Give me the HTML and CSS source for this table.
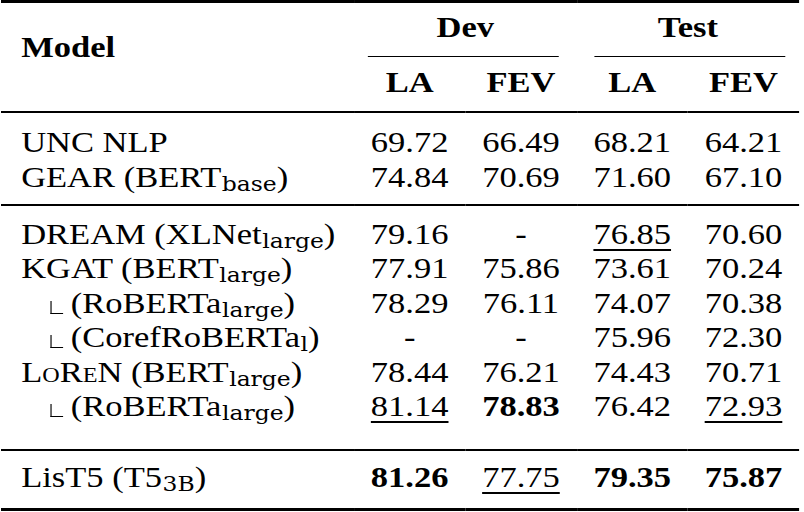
FILE: index.html
```html
<!DOCTYPE html>
<html lang="en">
<head>
<meta charset="utf-8">
<title>Fact verification results</title>
<link rel="stylesheet" href="styles.css">
</head>
<body>
<div class="sheet">
<table class="results">
<colgroup>
<col class="c-model"><col class="c-num"><col class="c-num"><col class="c-num"><col class="c-num">
</colgroup>
<thead>
<tr class="hrow1">
<th class="model" rowspan="2">Model</th>
<th class="group" colspan="2"><div class="glabel">Dev</div><div class="cmid cmid-dev"></div></th>
<th class="group" colspan="2"><div class="glabel">Test</div><div class="cmid cmid-test"></div></th>
</tr>
<tr class="hrow2"><th>LA</th><th>FEV</th><th>LA</th><th>FEV</th></tr>
</thead>
<tbody class="sec1">
<tr class="first"><td class="name">UNC NLP</td><td>69.72</td><td>66.49</td><td>68.21</td><td>64.21</td></tr>
<tr class="last"><td class="name">GEAR (BERT<sub>base</sub>)</td><td>74.84</td><td>70.69</td><td>71.60</td><td>67.10</td></tr>
</tbody>
<tbody class="sec2">
<tr class="first"><td class="name">DREAM (XLNet<sub>large</sub>)</td><td>79.16</td><td>-</td><td><u>76.85</u></td><td>70.60</td></tr>
<tr><td class="name">KGAT (BERT<sub>large</sub>)</td><td>77.91</td><td>75.86</td><td>73.61</td><td>70.24</td></tr>
<tr><td class="name sub"><span class="corner"></span>(RoBERTa<sub>large</sub>)</td><td>78.29</td><td>76.11</td><td>74.07</td><td>70.38</td></tr>
<tr><td class="name sub"><span class="corner"></span>(CorefRoBERTa<sub>l</sub>)</td><td>-</td><td>-</td><td>75.96</td><td>72.30</td></tr>
<tr><td class="name">L<span class="sc">o</span>R<span class="sc">e</span>N (BERT<sub>large</sub>)</td><td>78.44</td><td>76.21</td><td>74.43</td><td>70.71</td></tr>
<tr class="last"><td class="name sub"><span class="corner"></span>(RoBERTa<sub>large</sub>)</td><td><u>81.14</u></td><td><b>78.83</b></td><td>76.42</td><td><u>72.93</u></td></tr>
</tbody>
<tbody class="sec3">
<tr class="only"><td class="name">LisT5 (T5<sub>3B</sub>)</td><td><b>81.26</b></td><td><u>77.75</u></td><td><b>79.35</b></td><td><b>75.87</b></td></tr>
</tbody>
</table>
</div>
</body>
</html>
```

FILE: styles.css
```css
html, body {
  margin: 0;
  padding: 0;
  background: #ffffff;
}

.sheet {
  width: 694px;
  margin-left: 1px;
  transform: scaleX(1.15);
  transform-origin: 0 0;
  font-family: "Liberation Serif", "Times New Roman", serif;
  font-size: 30px;
  color: #000;
}

.results {
  width: 694px;
  table-layout: fixed;
  border-collapse: separate;
  border-spacing: 0;
}

.c-model { width: 307px; }
.c-num { width: 96.75px; }

.results th,
.results td {
  padding: 0 10px;
  line-height: 34.5px;
  white-space: nowrap;
  text-align: center;
  vertical-align: top;
}

.results th {
  font-weight: bold;
}

/* header */
.hrow1 th {
  border-top: 3px solid #000;
}

.results th.model {
  text-align: left;
  padding-top: 27px;
  padding-left: 17.5px;
  border-bottom: 2px solid #000;
}

.results th.group {
  padding: 6.6px 0 0;
}

.glabel {
  line-height: 34.5px;
}

.cmid {
  height: 1.5px;
  margin-top: 11.9px;
  background: #000;
}

.cmid-dev {
  margin-left: 12.2px;
  margin-right: 15.7px;
}

.cmid-test {
  margin-left: 15.7px;
  margin-right: 12.2px;
}

.hrow2 th {
  padding-top: 7.2px;
  padding-bottom: 11.8px;
  border-bottom: 2px solid #000;
}

/* body */
.results td.name {
  text-align: left;
  padding-left: 17.5px;
}

.results td.sub {
  padding-left: 42.6px;
}

.sec1 tr.first td {
  padding-top: 12.2px;
}

.sec1 tr.last td {
  padding-bottom: 10px;
  border-bottom: 2px solid #000;
}

.sec2 tr.first td {
  padding-top: 10.5px;
}

.sec2 tr.last td {
  padding-bottom: 25px;
  border-bottom: 2px solid #000;
}

.sec3 tr.only td {
  padding-top: 9px;
  padding-bottom: 13.5px;
  border-bottom: 3px solid #000;
}

sub {
  font-family: "DejaVu Serif", "Liberation Serif", serif;
  font-size: 0.68em;
  line-height: 0;
  vertical-align: -0.2em;
  margin-left: 0.5px;
}

.sc {
  font-variant: small-caps;
}

.corner {
  display: inline-block;
  width: 10.5px;
  height: 12px;
  margin-right: 6.5px;
  border-left: 1.3px solid #000;
  border-bottom: 1.3px solid #000;
  vertical-align: -1px;
}

u {
  text-decoration-thickness: 1.5px;
  text-underline-offset: 5px;
}

b {
  font-weight: bold;
}
```
